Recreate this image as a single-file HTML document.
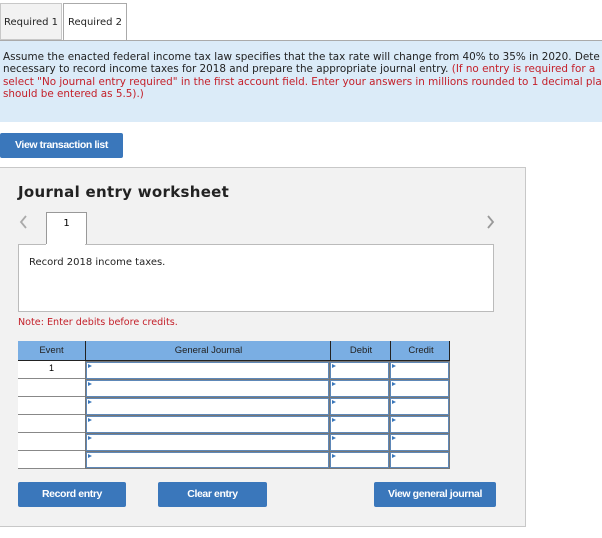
<!DOCTYPE html>
<html><head><style>
body{margin:0;width:602px;height:538px;background:#fff;font-family:"DejaVu Sans","Liberation Sans",sans-serif;position:relative;overflow:hidden}
.a{position:absolute}
.tab{position:absolute;top:3px;height:37px;border:1px solid #c8c8c8;font-size:10px;line-height:37px;text-align:center;box-sizing:border-box;color:#222}
.btn{position:absolute;background:#3a77bb;color:#fff;font-family:"Liberation Sans",sans-serif;font-weight:bold;font-size:10.5px;letter-spacing:-0.4px;text-align:center;border-radius:2px;height:25px;line-height:25px}
.ev{position:absolute;left:18px;width:67px;height:17px;background:#fff;border-bottom:1px solid #888;font-size:9px;font-family:'Liberation Sans',sans-serif;text-align:center;line-height:14px}
.in{position:absolute;height:16px;background:#fff;border:1.5px solid #5e88b8;box-sizing:border-box}
.in:before{content:"";position:absolute;left:1px;top:1px;border-left:4px solid #3a77bb;border-top:2.5px solid transparent;border-bottom:2.5px solid transparent}
.h{position:absolute;top:341px;height:20px;line-height:20px;text-align:center;font-size:9.5px;font-family:'Liberation Sans',sans-serif;color:#222}
</style></head><body>
<div class="tab" style="left:0;width:62px;background:#f2f2f2">Required 1</div>
<div class="tab" style="left:63px;width:64px;height:38px;background:#fff;border-color:#aaa;border-bottom:none">Required 2</div>
<div class="a" style="left:0;top:40px;width:602px;height:1px;background:#aaa"></div>
<div class="a" style="left:0;top:41px;width:602px;height:81px;background:#dbebf8"></div>
<div class="a" style="left:3px;top:51px;width:660px;font-size:10.4px;line-height:12.3px;color:#222;white-space:nowrap">Assume the enacted federal income tax law specifies that the tax rate will change from 40% to 35% in 2020. Dete<br>necessary to record income taxes for 2018 and prepare the appropriate journal entry. <span style="color:#c4202a">(If no entry is required for a</span><br><span style="color:#c4202a">select "No journal entry required" in the first account field. Enter your answers in millions rounded to 1 decimal pla<br>should be entered as 5.5).)</span></div>
<div class="btn" style="left:0;top:133px;width:123px">View transaction list</div>

<div class="a" style="left:-1px;top:167px;width:525px;height:358px;background:#f2f2f2;border:1px solid #c8c8c8"></div>
<div class="a" style="left:18px;top:183px;font-size:15px;font-weight:bold;color:#222;letter-spacing:0.3px">Journal entry worksheet</div>
<svg class="a" style="left:18px;top:214px" width="10" height="16"><path d="M8 2 L3 8 L8 14" stroke="#aaa" stroke-width="1.8" fill="none"/></svg>
<svg class="a" style="left:486px;top:214px" width="10" height="16"><path d="M2 2 L7 8 L2 14" stroke="#999" stroke-width="1.8" fill="none"/></svg>
<div class="a" style="left:46px;top:212px;width:39px;height:33px;background:#fff;border:1px solid #999;border-bottom:none;font-size:10px;text-align:center;line-height:22px">1</div>
<div class="a" style="left:18px;top:244px;width:474px;height:66px;background:#fff;border:1px solid #bbb"></div>
<div class="a" style="left:46px;top:244px;width:39px;height:1px;background:#fff"></div>
<div class="a" style="left:29px;top:257px;font-size:10px;color:#222">Record 2018 income taxes.</div>
<div class="a" style="left:18px;top:317px;font-size:9.6px;color:#c4202a">Note: Enter debits before credits.</div>

<div class="a" style="left:18px;top:341px;width:432px;height:20px;background:#7aaee3;border-right:1px solid #222;border-bottom:1px solid #222;box-sizing:border-box"></div>
<div class="h" style="left:18px;width:67px">Event</div>
<div class="h" style="left:85px;width:245px;border-left:1px solid #222">General Journal</div>
<div class="h" style="left:330px;width:60px;border-left:1px solid #222">Debit</div>
<div class="h" style="left:390px;width:60px;border-left:1px solid #222">Credit</div>

<div class="ev" style="top:361px">1</div>
<div class="ev" style="top:379px"></div>
<div class="ev" style="top:397px"></div>
<div class="ev" style="top:415px"></div>
<div class="ev" style="top:433px"></div>
<div class="ev" style="top:451px"></div>
<div class="a" style="left:85px;top:361px;width:365px;height:108px;background:#777"></div>
<div class="in" style="left:86px;top:362px;width:243px;height:17px"></div><div class="in" style="left:330px;top:362px;width:59px;height:17px"></div><div class="in" style="left:390px;top:362px;width:59px;height:17px"></div>
<div class="in" style="left:86px;top:380px;width:243px;height:17px"></div><div class="in" style="left:330px;top:380px;width:59px;height:17px"></div><div class="in" style="left:390px;top:380px;width:59px;height:17px"></div>
<div class="in" style="left:86px;top:398px;width:243px;height:17px"></div><div class="in" style="left:330px;top:398px;width:59px;height:17px"></div><div class="in" style="left:390px;top:398px;width:59px;height:17px"></div>
<div class="in" style="left:86px;top:416px;width:243px;height:17px"></div><div class="in" style="left:330px;top:416px;width:59px;height:17px"></div><div class="in" style="left:390px;top:416px;width:59px;height:17px"></div>
<div class="in" style="left:86px;top:434px;width:243px;height:17px"></div><div class="in" style="left:330px;top:434px;width:59px;height:17px"></div><div class="in" style="left:390px;top:434px;width:59px;height:17px"></div>
<div class="in" style="left:86px;top:452px;width:243px;height:16px"></div><div class="in" style="left:330px;top:452px;width:59px;height:16px"></div><div class="in" style="left:390px;top:452px;width:59px;height:16px"></div>

<div class="btn" style="left:18px;top:482px;width:108px">Record entry</div>
<div class="btn" style="left:158px;top:482px;width:109px">Clear entry</div>
<div class="btn" style="left:374px;top:482px;width:122px">View general journal</div>
</body></html>
